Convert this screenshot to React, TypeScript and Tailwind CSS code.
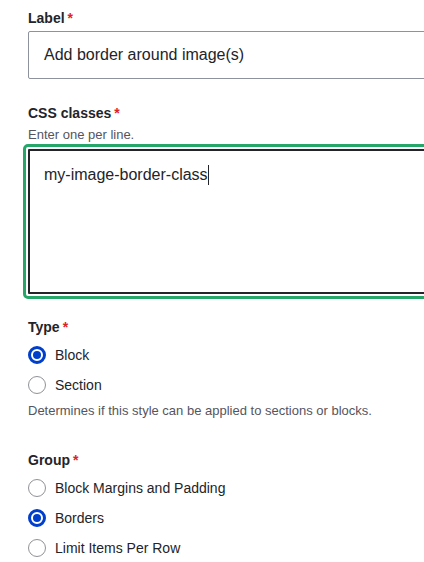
const font = { fontFamily: '"Liberation Sans", Arial, sans-serif' };

function Required() {
  return <span className="ml-[3px] text-[#dc2323]">*</span>;
}

function FieldLabel({ children }: { children: React.ReactNode }) {
  return (
    <div className="text-[14px] leading-[18px] font-bold text-[#232429] mb-1">
      {children}
      <Required />
    </div>
  );
}

function Radio({ label, checked = false }: { label: string; checked?: boolean }) {
  return (
    <div className="flex items-center h-[30px]">
      {checked ? (
        <span className="w-[18px] h-[18px] rounded-full border-[3px] border-[#003ecc] bg-white flex items-center justify-center shrink-0">
          <span className="w-[8px] h-[8px] rounded-full bg-[#003ecc]" />
        </span>
      ) : (
        <span className="w-[18px] h-[18px] rounded-full border border-[#919297] bg-white shrink-0" />
      )}
      <span className="ml-[9px] text-[14px] text-[#232429]">{label}</span>
    </div>
  );
}

export default function App() {
  return (
    <div className="w-[424px] h-[562px] overflow-hidden bg-white" style={font}>
      <div className="pt-[9px] pl-[28px] w-[460px]">
        {/* Label */}
        <FieldLabel>Label</FieldLabel>
        <div className="h-[48px] border border-[#8e929c] rounded-[2px] flex items-center px-[15px] text-[16px] text-[#232429]">
          Add border around image(s)
        </div>

        {/* CSS classes */}
        <div className="mt-[25px]">
          <FieldLabel>CSS classes</FieldLabel>
          <div className="text-[13px] leading-[18px] text-[#545560] mb-[5px]">Enter one per line.</div>
          <div className="relative">
            <div className="absolute -left-[5px] -top-[5px] -right-[5px] -bottom-[5px] rounded-[5px] border-[3px] border-[#26a769]" />
            <div className="relative h-[145px] border-2 border-[#232429] rounded-[1px] pl-[14px] pt-[12px] text-[16px] leading-[24px] text-[#232429]">
              my-image-border-class
              <span className="inline-block w-px h-[20px] bg-[#232429] align-middle -mt-[2px]" />
            </div>
          </div>
        </div>

        {/* Type */}
        <div className="mt-[24px]">
          <FieldLabel>Type</FieldLabel>
          <Radio label="Block" checked />
          <Radio label="Section" />
          <div className="text-[13px] leading-[18px] text-[#545560] mt-[2px]">
            Determines if this style can be applied to sections or blocks.
          </div>
        </div>

        {/* Group */}
        <div className="mt-[31px]">
          <FieldLabel>Group</FieldLabel>
          <Radio label="Block Margins and Padding" />
          <Radio label="Borders" checked />
          <Radio label="Limit Items Per Row" />
        </div>
      </div>
    </div>
  );
}
